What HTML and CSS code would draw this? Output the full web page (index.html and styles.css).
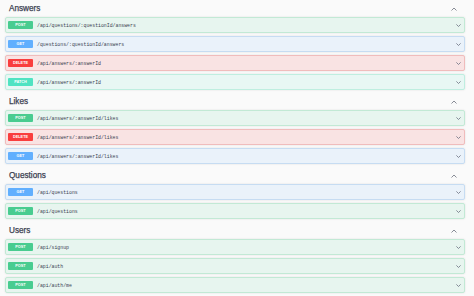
FILE: index.html
```html
<!DOCTYPE html>
<html lang="en">
<head>
    <meta charset="UTF-8">
    <meta name="viewport" content="width=device-width, initial-scale=1.0">
    <title>API Docs</title>
    <link rel="stylesheet" href="styles.css">
</head>
<body>

    <div class="tags">

        <section class="tag">
            <h3 class="tag-title">
                <span>Answers</span>
                <svg class="caret-up" width="6" height="4" viewBox="0 0 6 4"><path d="M0.5 3.5 L3 1 L5.5 3.5" fill="none" stroke="#7a7f8a" stroke-width="0.9"/></svg>
            </h3>
            <div class="op op-post">
                <span class="method">POST</span>
                <span class="path">/api/questions/:questionId/answers</span>
                <svg class="caret-down" width="5" height="3" viewBox="0 0 5 3"><path d="M0.4 0.4 L2.5 2.5 L4.6 0.4" fill="none" stroke="#6b7080" stroke-width="0.8"/></svg>
            </div>
            <div class="op op-get">
                <span class="method">GET</span>
                <span class="path">/questions/:questionId/answers</span>
                <svg class="caret-down" width="5" height="3" viewBox="0 0 5 3"><path d="M0.4 0.4 L2.5 2.5 L4.6 0.4" fill="none" stroke="#6b7080" stroke-width="0.8"/></svg>
            </div>
            <div class="op op-delete">
                <span class="method">DELETE</span>
                <span class="path">/api/answers/:answerId</span>
                <svg class="caret-down" width="5" height="3" viewBox="0 0 5 3"><path d="M0.4 0.4 L2.5 2.5 L4.6 0.4" fill="none" stroke="#6b7080" stroke-width="0.8"/></svg>
            </div>
            <div class="op op-patch">
                <span class="method">PATCH</span>
                <span class="path">/api/answers/:answerId</span>
                <svg class="caret-down" width="5" height="3" viewBox="0 0 5 3"><path d="M0.4 0.4 L2.5 2.5 L4.6 0.4" fill="none" stroke="#6b7080" stroke-width="0.8"/></svg>
            </div>
        </section>

        <section class="tag">
            <h3 class="tag-title">
                <span>Likes</span>
                <svg class="caret-up" width="6" height="4" viewBox="0 0 6 4"><path d="M0.5 3.5 L3 1 L5.5 3.5" fill="none" stroke="#7a7f8a" stroke-width="0.9"/></svg>
            </h3>
            <div class="op op-post">
                <span class="method">POST</span>
                <span class="path">/api/answers/:answerId/likes</span>
                <svg class="caret-down" width="5" height="3" viewBox="0 0 5 3"><path d="M0.4 0.4 L2.5 2.5 L4.6 0.4" fill="none" stroke="#6b7080" stroke-width="0.8"/></svg>
            </div>
            <div class="op op-delete">
                <span class="method">DELETE</span>
                <span class="path">/api/answers/:answerId/likes</span>
                <svg class="caret-down" width="5" height="3" viewBox="0 0 5 3"><path d="M0.4 0.4 L2.5 2.5 L4.6 0.4" fill="none" stroke="#6b7080" stroke-width="0.8"/></svg>
            </div>
            <div class="op op-get">
                <span class="method">GET</span>
                <span class="path">/api/answers/:answerId/likes</span>
                <svg class="caret-down" width="5" height="3" viewBox="0 0 5 3"><path d="M0.4 0.4 L2.5 2.5 L4.6 0.4" fill="none" stroke="#6b7080" stroke-width="0.8"/></svg>
            </div>
        </section>

        <section class="tag">
            <h3 class="tag-title">
                <span>Questions</span>
                <svg class="caret-up" width="6" height="4" viewBox="0 0 6 4"><path d="M0.5 3.5 L3 1 L5.5 3.5" fill="none" stroke="#7a7f8a" stroke-width="0.9"/></svg>
            </h3>
            <div class="op op-get">
                <span class="method">GET</span>
                <span class="path">/api/questions</span>
                <svg class="caret-down" width="5" height="3" viewBox="0 0 5 3"><path d="M0.4 0.4 L2.5 2.5 L4.6 0.4" fill="none" stroke="#6b7080" stroke-width="0.8"/></svg>
            </div>
            <div class="op op-post">
                <span class="method">POST</span>
                <span class="path">/api/questions</span>
                <svg class="caret-down" width="5" height="3" viewBox="0 0 5 3"><path d="M0.4 0.4 L2.5 2.5 L4.6 0.4" fill="none" stroke="#6b7080" stroke-width="0.8"/></svg>
            </div>
        </section>

        <section class="tag">
            <h3 class="tag-title">
                <span>Users</span>
                <svg class="caret-up" width="6" height="4" viewBox="0 0 6 4"><path d="M0.5 3.5 L3 1 L5.5 3.5" fill="none" stroke="#7a7f8a" stroke-width="0.9"/></svg>
            </h3>
            <div class="op op-post">
                <span class="method">POST</span>
                <span class="path">/api/signup</span>
                <svg class="caret-down" width="5" height="3" viewBox="0 0 5 3"><path d="M0.4 0.4 L2.5 2.5 L4.6 0.4" fill="none" stroke="#6b7080" stroke-width="0.8"/></svg>
            </div>
            <div class="op op-post">
                <span class="method">POST</span>
                <span class="path">/api/auth</span>
                <svg class="caret-down" width="5" height="3" viewBox="0 0 5 3"><path d="M0.4 0.4 L2.5 2.5 L4.6 0.4" fill="none" stroke="#6b7080" stroke-width="0.8"/></svg>
            </div>
            <div class="op op-post">
                <span class="method">POST</span>
                <span class="path">/api/auth/me</span>
                <svg class="caret-down" width="5" height="3" viewBox="0 0 5 3"><path d="M0.4 0.4 L2.5 2.5 L4.6 0.4" fill="none" stroke="#6b7080" stroke-width="0.8"/></svg>
            </div>
        </section>

    </div>

</body>
</html>
```

FILE: styles.css
```css
body {
    font-family: 'Liberation Sans', Arial, sans-serif;
    background-color: #fafafa;
    margin: 0;
    padding: 0;
    color: #3b4151;
}

.tags {
    padding: 0 9px 0 5px;
}

.tag-title {
    display: flex;
    align-items: center;
    justify-content: space-between;
    height: 17px;
    margin: 0;
    padding: 0 8px 0 4px;
    box-sizing: border-box;
    font-size: 8.2px;
    font-weight: normal;
    -webkit-text-stroke: 0.25px #3b4151;
    color: #3b4151;
}

.caret-up {
    display: block;
}

/* Operation rows */
.op {
    display: flex;
    align-items: center;
    height: 16px;
    margin-bottom: 3px;
    padding: 0 3px 0 2px;
    box-sizing: border-box;
    border: 1px solid;
    border-radius: 2px;
    box-shadow: 0 0 2px rgba(0, 0, 0, 0.12);
}

.method {
    flex: none;
    width: 25px;
    height: 8px;
    line-height: 8px;
    margin-right: 4px;
    border-radius: 1px;
    color: #fff;
    font-size: 3.8px;
    font-weight: bold;
    text-align: center;
}

.path {
    flex: 1;
    font-family: 'Liberation Mono', 'Courier New', monospace;
    font-size: 4.85px;
    color: #3b4151;
    white-space: nowrap;
}

.caret-down {
    display: block;
    flex: none;
}

.op-post {
    background-color: rgba(73, 204, 144, 0.1);
    border-color: #c2e9d5;
}

.op-post .method {
    background-color: #49cc90;
}

.op-get {
    background-color: rgba(97, 175, 254, 0.1);
    border-color: #c6dcf2;
}

.op-get .method {
    background-color: #61affe;
}

.op-delete {
    background-color: rgba(249, 62, 62, 0.12);
    border-color: #f0bcbc;
}

.op-delete .method {
    background-color: #f93e3e;
}

.op-patch {
    background-color: rgba(80, 227, 194, 0.1);
    border-color: #bfeee0;
}

.op-patch .method {
    background-color: #50e3c2;
}
```
